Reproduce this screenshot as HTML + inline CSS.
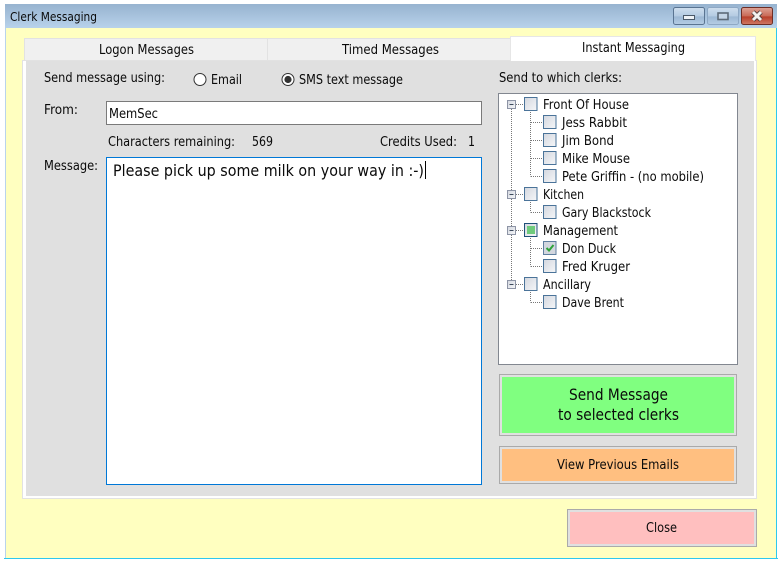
<!DOCTYPE html>
<html><head><meta charset="utf-8"><title>Clerk Messaging</title>
<style>
html,body{margin:0;padding:0;background:#fff;width:781px;height:563px;overflow:hidden}
svg{display:block}
text{font-family:"DejaVu Sans",sans-serif;font-size:13px;fill:#0a0a0a;}
.big{font-size:16px}
.cb{fill:url(#cbg);stroke:#4a7399;stroke-width:1}
.ln{stroke:#777;stroke-width:1;stroke-dasharray:1 1;fill:none}
.ex{fill:url(#cbg);stroke:#8d94a5}
</style></head><body>
<svg width="781" height="563" viewBox="0 0 781 563" xmlns="http://www.w3.org/2000/svg">
<defs>
<linearGradient id="tb" x1="0" y1="0" x2="0" y2="1"><stop offset="0" stop-color="#97b3cf"/><stop offset="1" stop-color="#b9d3ec"/></linearGradient>
<linearGradient id="cbg" x1="0" y1="0" x2="1" y2="1"><stop offset="0" stop-color="#d3d7df"/><stop offset="1" stop-color="#f6f7f9"/></linearGradient>
<linearGradient id="bb" x1="0" y1="0" x2="0" y2="1"><stop offset="0" stop-color="#cfdeee"/><stop offset=".5" stop-color="#b4cbe2"/><stop offset=".55" stop-color="#9db8d4"/><stop offset="1" stop-color="#b5cde4"/></linearGradient>
<linearGradient id="bc" x1="0" y1="0" x2="0" y2="1"><stop offset="0" stop-color="#dda497"/><stop offset=".5" stop-color="#c96a57"/><stop offset=".55" stop-color="#b83f2a"/><stop offset="1" stop-color="#cf7a66"/></linearGradient>
</defs>
<!-- window -->
<rect x="5" y="4" width="772" height="25" fill="url(#tb)"/>
<rect x="5" y="28" width="772" height="530" fill="#FFFFC0"/>
<rect x="5" y="28" width="1" height="530" fill="#b9d3ec"/>
<rect x="4" y="558" width="774" height="1" fill="#2dc8ee"/>
<rect x="776" y="28" width="1" height="531" fill="#2dc8ee"/>
<text x="10" y="21" textLength="87" lengthAdjust="spacingAndGlyphs" style="font-size:12px">Clerk Messaging</text>
<!-- window buttons -->
<rect x="673.5" y="7.5" width="31" height="17" rx="2" fill="url(#bb)" stroke="#5a7491"/>
<rect x="683.5" y="15.5" width="11" height="4" fill="#eef2f6" stroke="#4a5868" stroke-width="1"/>
<rect x="707.5" y="7.5" width="31" height="17" rx="2" fill="url(#bb)" stroke="#8ea8c4"/>
<rect x="718" y="13" width="10" height="6.5" fill="#c5d5e6" stroke="#5d6a78" stroke-width="1.6"/>
<rect x="741.5" y="7.5" width="31" height="17" rx="2" fill="url(#bc)" stroke="#6e2e25"/>
<path d="M753 12 L761 20 M761 12 L753 20" stroke="#4a3a38" stroke-width="4.6"/>
<path d="M753 12 L761 20 M761 12 L753 20" stroke="#f4f1ee" stroke-width="3"/>
<!-- tabs -->
<rect x="24.5" y="38.5" width="243" height="23" fill="#F0F0F0" stroke="#e2e2e2"/>
<rect x="267.5" y="38.5" width="243" height="23" fill="#F0F0F0" stroke="#e2e2e2"/>
<rect x="22" y="60" width="735" height="439" fill="#fff"/>
<rect x="22.5" y="60.5" width="734" height="438" fill="none" stroke="#e2e2e2"/>
<rect x="510" y="36" width="246" height="26" fill="#fff"/>
<path d="M510.5 61 V36.5 H755.5 V61" fill="none" stroke="#e6e6e6"/>
<rect x="26" y="61" width="728" height="435" fill="#E0E0E0"/>
<text x="99" y="54" textLength="95" lengthAdjust="spacingAndGlyphs">Logon Messages</text>
<text x="342" y="54" textLength="97" lengthAdjust="spacingAndGlyphs">Timed Messages</text>
<text x="582" y="52" textLength="103" lengthAdjust="spacingAndGlyphs">Instant Messaging</text>
<!-- row 1 -->
<text x="44" y="82" textLength="121" lengthAdjust="spacingAndGlyphs">Send message using:</text>
<circle cx="200" cy="79.5" r="6" fill="#fff" stroke="#333"/>
<text x="211" y="84" textLength="31" lengthAdjust="spacingAndGlyphs">Email</text>
<circle cx="288" cy="79.5" r="6" fill="#fff" stroke="#333"/>
<circle cx="288" cy="79.5" r="3.6" fill="#333"/>
<text x="299" y="84" textLength="104" lengthAdjust="spacingAndGlyphs">SMS text message</text>
<text x="499" y="82" textLength="123" lengthAdjust="spacingAndGlyphs">Send to which clerks:</text>
<!-- from -->
<text x="44" y="114" textLength="34" lengthAdjust="spacingAndGlyphs">From:</text>
<rect x="106.5" y="101.5" width="375" height="23" fill="#fff" stroke="#7a7a7a"/>
<text x="109" y="118" textLength="49" lengthAdjust="spacingAndGlyphs">MemSec</text>
<text x="108" y="146" textLength="127" lengthAdjust="spacingAndGlyphs">Characters remaining:</text>
<text x="252" y="146" textLength="21" lengthAdjust="spacingAndGlyphs">569</text>
<text x="380" y="146" textLength="77" lengthAdjust="spacingAndGlyphs">Credits Used:</text>
<text x="468" y="146" textLength="7" lengthAdjust="spacingAndGlyphs">1</text>
<!-- message -->
<text x="44" y="170" textLength="54" lengthAdjust="spacingAndGlyphs">Message:</text>
<rect x="106.5" y="157.5" width="375" height="327" fill="#fff" stroke="#0078d7"/>
<text x="113" y="176" class="big" textLength="311" lengthAdjust="spacingAndGlyphs">Please pick up some milk on your way in :-)</text>
<rect x="425" y="161" width="1" height="18" fill="#000"/>
<!-- tree -->
<rect x="498.5" y="93.5" width="239" height="271" fill="#fff" stroke="#828790"/>
<path class="ln" d="M511.5 109 V284.5 M516 104.5 H524 M516 194.5 H524 M516 230.5 H524 M516 284.5 H524"/>
<path class="ln" d="M530.5 110 V176.5 M531 122.5 H543 M531 140.5 H543 M531 158.5 H543 M531 176.5 H543"/>
<path class="ln" d="M530.5 200 V212.5 M531 212.5 H543"/>
<path class="ln" d="M530.5 236 V266.5 M531 248.5 H543 M531 266.5 H543"/>
<path class="ln" d="M530.5 290 V302.5 M531 302.5 H543"/>
<g>
<rect class="ex" x="507.5" y="100.5" width="8" height="8"/><path d="M509.5 104.5H513.5" stroke="#3c4a5c"/>
<rect class="ex" x="507.5" y="190.5" width="8" height="8"/><path d="M509.5 194.5H513.5" stroke="#3c4a5c"/>
<rect class="ex" x="507.5" y="226.5" width="8" height="8"/><path d="M509.5 230.5H513.5" stroke="#3c4a5c"/>
<rect class="ex" x="507.5" y="280.5" width="8" height="8"/><path d="M509.5 284.5H513.5" stroke="#3c4a5c"/>
</g>
<rect class="cb" x="524.5" y="97.5" width="12.5" height="13"/>
<rect class="cb" x="543.5" y="115.5" width="12.5" height="13"/>
<rect class="cb" x="543.5" y="133.5" width="12.5" height="13"/>
<rect class="cb" x="543.5" y="151.5" width="12.5" height="13"/>
<rect class="cb" x="543.5" y="169.5" width="12.5" height="13"/>
<rect class="cb" x="524.5" y="187.5" width="12.5" height="13"/>
<rect class="cb" x="543.5" y="205.5" width="12.5" height="13"/>
<rect class="cb" x="524.5" y="223.5" width="12.5" height="13" style="stroke:#1f4f78"/>
<rect x="527" y="226" width="8" height="8" fill="#6fcb7c"/>
<rect x="543.5" y="241.5" width="12.5" height="13" fill="#d3d7df" stroke="#5f7f9f"/>
<path d="M546.5 248 L549 250.5 L553.5 245" fill="none" stroke="#2fa33a" stroke-width="2"/>
<rect class="cb" x="543.5" y="259.5" width="12.5" height="13"/>
<rect class="cb" x="524.5" y="277.5" width="12.5" height="13"/>
<rect class="cb" x="543.5" y="295.5" width="12.5" height="13"/>
<text x="543" y="109" textLength="86" lengthAdjust="spacingAndGlyphs">Front Of House</text>
<text x="562" y="127" textLength="65" lengthAdjust="spacingAndGlyphs">Jess Rabbit</text>
<text x="562" y="145" textLength="52" lengthAdjust="spacingAndGlyphs">Jim Bond</text>
<text x="562" y="163" textLength="68" lengthAdjust="spacingAndGlyphs">Mike Mouse</text>
<text x="562" y="181" textLength="142" lengthAdjust="spacingAndGlyphs">Pete Griffin - (no mobile)</text>
<text x="543" y="199" textLength="41" lengthAdjust="spacingAndGlyphs">Kitchen</text>
<text x="562" y="217" textLength="89" lengthAdjust="spacingAndGlyphs">Gary Blackstock</text>
<text x="543" y="235" textLength="75" lengthAdjust="spacingAndGlyphs">Management</text>
<text x="562" y="253" textLength="54" lengthAdjust="spacingAndGlyphs">Don Duck</text>
<text x="562" y="271" textLength="68" lengthAdjust="spacingAndGlyphs">Fred Kruger</text>
<text x="543" y="289" textLength="48" lengthAdjust="spacingAndGlyphs">Ancillary</text>
<text x="562" y="307" textLength="62" lengthAdjust="spacingAndGlyphs">Dave Brent</text>
<!-- buttons -->
<rect x="499.5" y="374.5" width="237" height="61" fill="#E0E0E0" stroke="#aaa"/>
<rect x="502" y="377" width="232" height="56" fill="#80FF80"/>
<text x="569" y="400" class="big" textLength="99" lengthAdjust="spacingAndGlyphs">Send Message</text>
<text x="558" y="420" class="big" textLength="121" lengthAdjust="spacingAndGlyphs">to selected clerks</text>
<rect x="499.5" y="446.5" width="237" height="37" fill="#E0E0E0" stroke="#aaa"/>
<rect x="502" y="449" width="232" height="32" fill="#FFBF80"/>
<text x="557" y="469" textLength="122" lengthAdjust="spacingAndGlyphs">View Previous Emails</text>
<rect x="567.5" y="509.5" width="189" height="37" fill="#E0E0E0" stroke="#aaa"/>
<rect x="570" y="512" width="184" height="32" fill="#FFBFBF"/>
<text x="646" y="532" textLength="31" lengthAdjust="spacingAndGlyphs">Close</text>
</svg>
</body></html>
